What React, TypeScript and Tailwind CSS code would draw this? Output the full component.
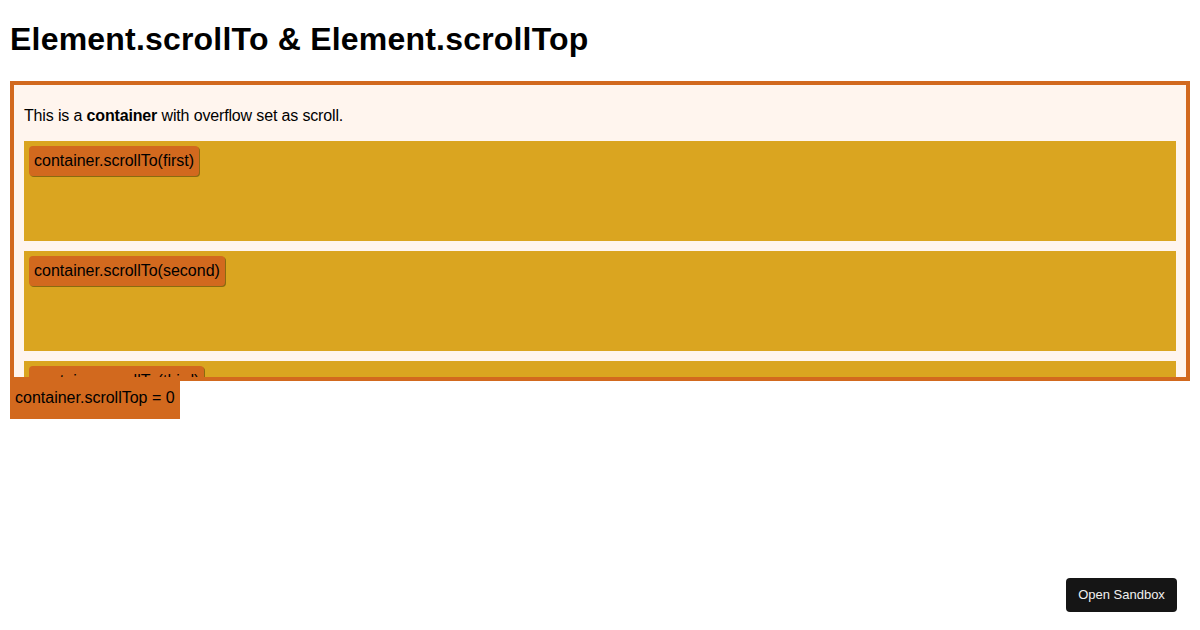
import React from "react";

function Section({ label }: { label: string }) {
  return (
    <div className="h-[100px] bg-[#daa520] p-[5px] mb-[10px]">
      <button className="h-[30px] px-[5px] rounded-[4px] bg-[#d2691e] text-[16px] text-black shadow-[1px_1px_0_#8a6a10] leading-none">
        {label}
      </button>
    </div>
  );
}

export default function App() {
  return (
    <div className="relative w-[1200px] h-[630px] bg-white text-black px-[10px] font-['Liberation_Sans',Arial,sans-serif]">
      <h1 className="pt-[21px] h-[81px] text-[32px] font-bold leading-[1.15] tracking-[0.2px]">
        Element.scrollTo &amp; Element.scrollTop
      </h1>
      <div className="h-[300px] overflow-hidden border-4 border-[#d2691e] bg-[#fff5ee] px-[10px] pt-[22px]">
        <p className="text-[16px] leading-[18px] mb-[16px] tracking-[-0.15px]">
          This is a <b>container</b> with overflow set as scroll.
        </p>
        <Section label="container.scrollTo(first)" />
        <Section label="container.scrollTo(second)" />
        <Section label="container.scrollTo(third)" />
      </div>
      <div className="relative -mt-[4px] inline-block bg-[#d2691e] px-[5px] py-[12px] text-[16px] leading-[18px]">
        container.scrollTop = 0
      </div>
      <button className="absolute right-[23px] bottom-[18px] w-[111px] h-[34px] rounded-[4px] bg-[#151515] text-[#f0f0f0] text-[13px] font-['Liberation_Sans',Arial,sans-serif]">
        Open Sandbox
      </button>
    </div>
  );
}
